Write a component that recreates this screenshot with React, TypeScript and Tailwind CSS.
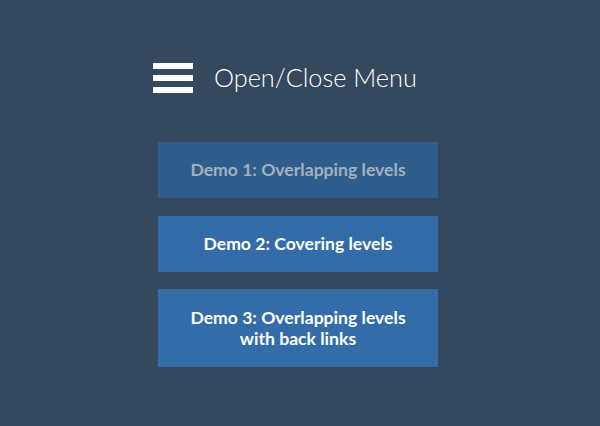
export default function App() {
  return (
    <div className="w-[600px] h-[426px] bg-[#34495e] overflow-hidden" style={{ fontFamily: "Lato, 'Open Sans', sans-serif" }}>
      <div className="flex items-center pl-[153px] pt-[63px] h-[93px]">
        <div className="flex flex-col gap-[6px] w-[40px]">
          <div className="h-[6px] bg-white" />
          <div className="h-[6px] bg-white" />
          <div className="h-[6px] bg-white" />
        </div>
        <span className="ml-[21px] text-[25.3px] font-light text-white leading-none -mt-[1px]">Open/Close Menu</span>
      </div>
      <div className="flex flex-col ml-[158px] mt-[49px] w-[280px]">
        <div className="h-[56px] flex items-center justify-center bg-[#2f5e8d] text-[#a2b0be] font-bold text-[17.6px] text-center">
          Demo 1: Overlapping levels
        </div>
        <div className="mt-[18px] h-[56px] flex items-center justify-center bg-[#336ca8] text-white font-bold text-[17.6px] text-center">
          Demo 2: Covering levels
        </div>
        <div className="mt-[17px] h-[78px] flex items-center justify-center bg-[#336ca8] text-white font-bold text-[17.6px] leading-[21px] text-center">
          <span>
            Demo 3: Overlapping levels
            <br />
            with back links
          </span>
        </div>
      </div>
    </div>
  );
}
